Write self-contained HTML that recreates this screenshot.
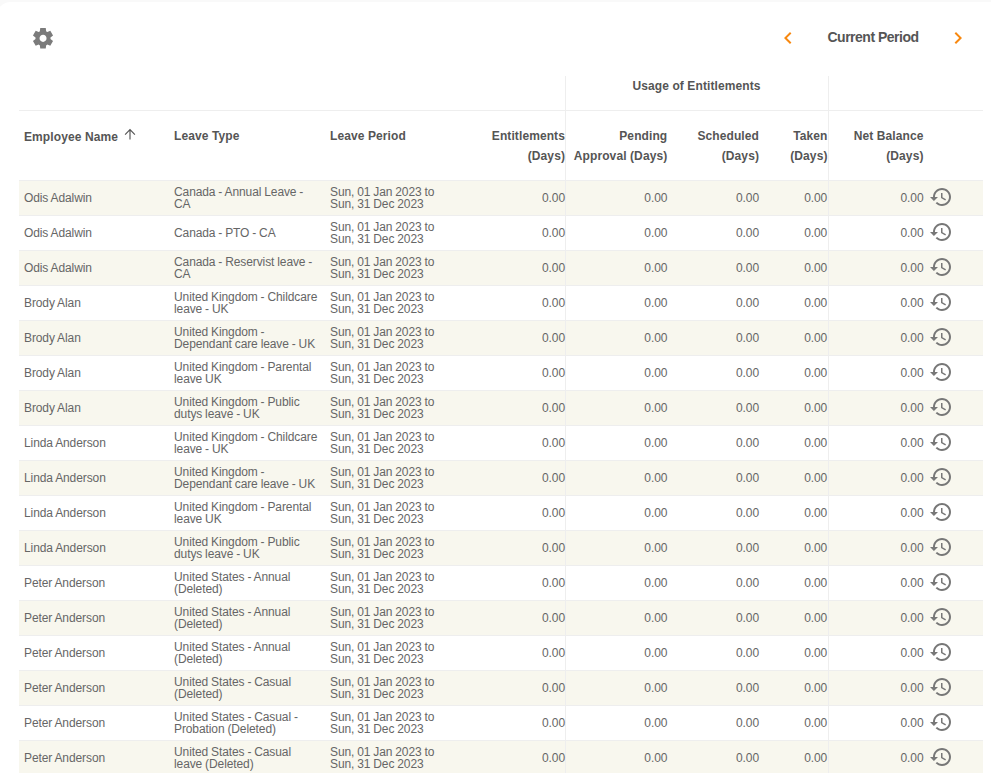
<!DOCTYPE html><html><head><meta charset="utf-8"><style>
html,body{margin:0;padding:0}
body{width:991px;height:773px;overflow:hidden;position:relative;background:#f9f9f9;font-family:"Liberation Sans",sans-serif;}
.card{position:absolute;left:-4px;top:2px;width:1010px;height:800px;background:#fff;border-radius:15px;}
.t{position:absolute;white-space:nowrap;font-size:12px;line-height:12px;color:#666666;letter-spacing:-0.1px;word-spacing:-0.3px}
.h{position:absolute;white-space:nowrap;font-size:12px;line-height:20px;font-weight:bold;color:#555555;letter-spacing:0.1px}
.r{text-align:right}
.hl{position:absolute;height:1px;background:#eeeeee;left:19px;width:964px}
.vl{position:absolute;width:1px;background:#eeeeee;}
.bg{position:absolute;background:#f8f7ee;left:19px;width:964px;height:35px}
svg{position:absolute}
</style></head><body><div class="card"></div>
<svg style="left:31px;top:26px" width="24" height="24.6" preserveAspectRatio="none" viewBox="0 -960 960 960"><path fill="#7b7b7b" d="m370-80-16-128q-13-5-24.5-12T307-235l-119 50L78-375l103-78q-1-7-1-13.5v-27q0-6.5 1-13.5L78-585l110-190 119 50q11-8 23-15t24-12l16-128h220l16 128q13 5 24.5 12t22.5 15l119-50 110 190-103 78q1 7 1 13.5v27q0 6.5-2 13.5l103 78-110 190-118-50q-11 8-23 15t-24 12L590-80H370Zm112-260q58 0 99-41t41-99q0-58-41-99t-99-41q-59 0-99.5 41T342-480q0 58 40.5 99t99.5 41Z"/></svg>
<svg style="left:776px;top:26px" width="24" height="24" viewBox="0 0 24 24"><path fill="#f8880f" d="M15.41 7.41L14 6l-6 6 6 6 1.41-1.41L10.83 12z"/></svg>
<svg style="left:946.4px;top:26.4px" width="24" height="24" viewBox="0 0 24 24"><path fill="#f8880f" d="M10 6L8.59 7.41 13.17 12l-4.58 4.59L10 18l6-6z"/></svg>
<div class="h" style="left:827.5px;top:27px;font-size:14px;letter-spacing:-0.5px;line-height:20px;color:#555">Current Period</div>
<div class="bg" style="top:180px"></div>
<div class="bg" style="top:250px"></div>
<div class="bg" style="top:320px"></div>
<div class="bg" style="top:390px"></div>
<div class="bg" style="top:460px"></div>
<div class="bg" style="top:530px"></div>
<div class="bg" style="top:600px"></div>
<div class="bg" style="top:670px"></div>
<div class="bg" style="top:740px"></div>
<div class="hl" style="top:110px"></div>
<div class="hl" style="top:180px"></div>
<div class="hl" style="top:215px"></div>
<div class="hl" style="top:250px"></div>
<div class="hl" style="top:285px"></div>
<div class="hl" style="top:320px"></div>
<div class="hl" style="top:355px"></div>
<div class="hl" style="top:390px"></div>
<div class="hl" style="top:425px"></div>
<div class="hl" style="top:460px"></div>
<div class="hl" style="top:495px"></div>
<div class="hl" style="top:530px"></div>
<div class="hl" style="top:565px"></div>
<div class="hl" style="top:600px"></div>
<div class="hl" style="top:635px"></div>
<div class="hl" style="top:670px"></div>
<div class="hl" style="top:705px"></div>
<div class="hl" style="top:740px"></div>
<div class="vl" style="left:565px;top:76px;height:700px"></div>
<div class="vl" style="left:828px;top:76px;height:700px"></div>
<div class="h" style="left:565px;width:263px;text-align:center;top:76px">Usage of Entitlements</div>
<div class="h" style="left:24px;top:127px">Employee Name</div>
<div class="h" style="left:174px;top:126px">Leave Type</div>
<div class="h" style="left:330px;top:126px">Leave Period</div>
<div class="h r" style="right:426px;top:126px">Entitlements<br>(Days)</div>
<div class="h r" style="right:323.70000000000005px;top:126px">Pending<br>Approval (Days)</div>
<div class="h r" style="right:232px;top:126px">Scheduled<br>(Days)</div>
<div class="h r" style="right:163.5px;top:126px">Taken<br>(Days)</div>
<div class="h r" style="right:67.5px;top:126px">Net Balance<br>(Days)</div>
<svg style="left:123px;top:127px" width="14" height="14" viewBox="0 0 14 14"><path d="M7 12.5V2.6M2.1 7.6L7 2.6 11.9 7.6" fill="none" stroke="#555" stroke-width="1.15"/></svg>
<div class="t" style="left:24px;top:191.5px">Odis Adalwin</div>
<div class="t" style="left:174px;top:185.5px">Canada - Annual Leave -<br>CA</div>
<div class="t" style="left:330px;top:185.5px">Sun, 01 Jan 2023 to<br>Sun, 31 Dec 2023</div>
<div class="t r" style="right:426px;top:191.5px">0.00</div>
<div class="t r" style="right:323.7px;top:191.5px">0.00</div>
<div class="t r" style="right:232px;top:191.5px">0.00</div>
<div class="t r" style="right:163.8px;top:191.5px">0.00</div>
<div class="t r" style="right:67.5px;top:191.5px">0.00</div>
<svg style="left:929px;top:185.2px" width="24" height="24" viewBox="0 0 24 24"><path fill="#777777" d="M13 3c-4.97 0-9 4.03-9 9H1l3.89 3.89.07.14L9 12H6c0-3.87 3.13-7 7-7s7 3.13 7 7-3.13 7-7 7c-1.93 0-3.68-.79-4.94-2.06l-1.42 1.42C8.27 19.99 10.51 21 13 21c4.97 0 9-4.03 9-9s-4.03-9-9-9zm-1 5v5l4.28 2.54.72-1.21-3.5-2.08V8H12z"/></svg>
<div class="t" style="left:24px;top:226.5px">Odis Adalwin</div>
<div class="t" style="left:174px;top:226.5px">Canada - PTO - CA</div>
<div class="t" style="left:330px;top:220.5px">Sun, 01 Jan 2023 to<br>Sun, 31 Dec 2023</div>
<div class="t r" style="right:426px;top:226.5px">0.00</div>
<div class="t r" style="right:323.7px;top:226.5px">0.00</div>
<div class="t r" style="right:232px;top:226.5px">0.00</div>
<div class="t r" style="right:163.8px;top:226.5px">0.00</div>
<div class="t r" style="right:67.5px;top:226.5px">0.00</div>
<svg style="left:929px;top:220.2px" width="24" height="24" viewBox="0 0 24 24"><path fill="#777777" d="M13 3c-4.97 0-9 4.03-9 9H1l3.89 3.89.07.14L9 12H6c0-3.87 3.13-7 7-7s7 3.13 7 7-3.13 7-7 7c-1.93 0-3.68-.79-4.94-2.06l-1.42 1.42C8.27 19.99 10.51 21 13 21c4.97 0 9-4.03 9-9s-4.03-9-9-9zm-1 5v5l4.28 2.54.72-1.21-3.5-2.08V8H12z"/></svg>
<div class="t" style="left:24px;top:261.5px">Odis Adalwin</div>
<div class="t" style="left:174px;top:255.5px">Canada - Reservist leave -<br>CA</div>
<div class="t" style="left:330px;top:255.5px">Sun, 01 Jan 2023 to<br>Sun, 31 Dec 2023</div>
<div class="t r" style="right:426px;top:261.5px">0.00</div>
<div class="t r" style="right:323.7px;top:261.5px">0.00</div>
<div class="t r" style="right:232px;top:261.5px">0.00</div>
<div class="t r" style="right:163.8px;top:261.5px">0.00</div>
<div class="t r" style="right:67.5px;top:261.5px">0.00</div>
<svg style="left:929px;top:255.2px" width="24" height="24" viewBox="0 0 24 24"><path fill="#777777" d="M13 3c-4.97 0-9 4.03-9 9H1l3.89 3.89.07.14L9 12H6c0-3.87 3.13-7 7-7s7 3.13 7 7-3.13 7-7 7c-1.93 0-3.68-.79-4.94-2.06l-1.42 1.42C8.27 19.99 10.51 21 13 21c4.97 0 9-4.03 9-9s-4.03-9-9-9zm-1 5v5l4.28 2.54.72-1.21-3.5-2.08V8H12z"/></svg>
<div class="t" style="left:24px;top:296.5px">Brody Alan</div>
<div class="t" style="left:174px;top:290.5px">United Kingdom - Childcare<br>leave - UK</div>
<div class="t" style="left:330px;top:290.5px">Sun, 01 Jan 2023 to<br>Sun, 31 Dec 2023</div>
<div class="t r" style="right:426px;top:296.5px">0.00</div>
<div class="t r" style="right:323.7px;top:296.5px">0.00</div>
<div class="t r" style="right:232px;top:296.5px">0.00</div>
<div class="t r" style="right:163.8px;top:296.5px">0.00</div>
<div class="t r" style="right:67.5px;top:296.5px">0.00</div>
<svg style="left:929px;top:290.2px" width="24" height="24" viewBox="0 0 24 24"><path fill="#777777" d="M13 3c-4.97 0-9 4.03-9 9H1l3.89 3.89.07.14L9 12H6c0-3.87 3.13-7 7-7s7 3.13 7 7-3.13 7-7 7c-1.93 0-3.68-.79-4.94-2.06l-1.42 1.42C8.27 19.99 10.51 21 13 21c4.97 0 9-4.03 9-9s-4.03-9-9-9zm-1 5v5l4.28 2.54.72-1.21-3.5-2.08V8H12z"/></svg>
<div class="t" style="left:24px;top:331.5px">Brody Alan</div>
<div class="t" style="left:174px;top:325.5px">United Kingdom -<br>Dependant care leave - UK</div>
<div class="t" style="left:330px;top:325.5px">Sun, 01 Jan 2023 to<br>Sun, 31 Dec 2023</div>
<div class="t r" style="right:426px;top:331.5px">0.00</div>
<div class="t r" style="right:323.7px;top:331.5px">0.00</div>
<div class="t r" style="right:232px;top:331.5px">0.00</div>
<div class="t r" style="right:163.8px;top:331.5px">0.00</div>
<div class="t r" style="right:67.5px;top:331.5px">0.00</div>
<svg style="left:929px;top:325.2px" width="24" height="24" viewBox="0 0 24 24"><path fill="#777777" d="M13 3c-4.97 0-9 4.03-9 9H1l3.89 3.89.07.14L9 12H6c0-3.87 3.13-7 7-7s7 3.13 7 7-3.13 7-7 7c-1.93 0-3.68-.79-4.94-2.06l-1.42 1.42C8.27 19.99 10.51 21 13 21c4.97 0 9-4.03 9-9s-4.03-9-9-9zm-1 5v5l4.28 2.54.72-1.21-3.5-2.08V8H12z"/></svg>
<div class="t" style="left:24px;top:366.5px">Brody Alan</div>
<div class="t" style="left:174px;top:360.5px">United Kingdom - Parental<br>leave UK</div>
<div class="t" style="left:330px;top:360.5px">Sun, 01 Jan 2023 to<br>Sun, 31 Dec 2023</div>
<div class="t r" style="right:426px;top:366.5px">0.00</div>
<div class="t r" style="right:323.7px;top:366.5px">0.00</div>
<div class="t r" style="right:232px;top:366.5px">0.00</div>
<div class="t r" style="right:163.8px;top:366.5px">0.00</div>
<div class="t r" style="right:67.5px;top:366.5px">0.00</div>
<svg style="left:929px;top:360.2px" width="24" height="24" viewBox="0 0 24 24"><path fill="#777777" d="M13 3c-4.97 0-9 4.03-9 9H1l3.89 3.89.07.14L9 12H6c0-3.87 3.13-7 7-7s7 3.13 7 7-3.13 7-7 7c-1.93 0-3.68-.79-4.94-2.06l-1.42 1.42C8.27 19.99 10.51 21 13 21c4.97 0 9-4.03 9-9s-4.03-9-9-9zm-1 5v5l4.28 2.54.72-1.21-3.5-2.08V8H12z"/></svg>
<div class="t" style="left:24px;top:401.5px">Brody Alan</div>
<div class="t" style="left:174px;top:395.5px">United Kingdom - Public<br>dutys leave - UK</div>
<div class="t" style="left:330px;top:395.5px">Sun, 01 Jan 2023 to<br>Sun, 31 Dec 2023</div>
<div class="t r" style="right:426px;top:401.5px">0.00</div>
<div class="t r" style="right:323.7px;top:401.5px">0.00</div>
<div class="t r" style="right:232px;top:401.5px">0.00</div>
<div class="t r" style="right:163.8px;top:401.5px">0.00</div>
<div class="t r" style="right:67.5px;top:401.5px">0.00</div>
<svg style="left:929px;top:395.2px" width="24" height="24" viewBox="0 0 24 24"><path fill="#777777" d="M13 3c-4.97 0-9 4.03-9 9H1l3.89 3.89.07.14L9 12H6c0-3.87 3.13-7 7-7s7 3.13 7 7-3.13 7-7 7c-1.93 0-3.68-.79-4.94-2.06l-1.42 1.42C8.27 19.99 10.51 21 13 21c4.97 0 9-4.03 9-9s-4.03-9-9-9zm-1 5v5l4.28 2.54.72-1.21-3.5-2.08V8H12z"/></svg>
<div class="t" style="left:24px;top:436.5px">Linda Anderson</div>
<div class="t" style="left:174px;top:430.5px">United Kingdom - Childcare<br>leave - UK</div>
<div class="t" style="left:330px;top:430.5px">Sun, 01 Jan 2023 to<br>Sun, 31 Dec 2023</div>
<div class="t r" style="right:426px;top:436.5px">0.00</div>
<div class="t r" style="right:323.7px;top:436.5px">0.00</div>
<div class="t r" style="right:232px;top:436.5px">0.00</div>
<div class="t r" style="right:163.8px;top:436.5px">0.00</div>
<div class="t r" style="right:67.5px;top:436.5px">0.00</div>
<svg style="left:929px;top:430.2px" width="24" height="24" viewBox="0 0 24 24"><path fill="#777777" d="M13 3c-4.97 0-9 4.03-9 9H1l3.89 3.89.07.14L9 12H6c0-3.87 3.13-7 7-7s7 3.13 7 7-3.13 7-7 7c-1.93 0-3.68-.79-4.94-2.06l-1.42 1.42C8.27 19.99 10.51 21 13 21c4.97 0 9-4.03 9-9s-4.03-9-9-9zm-1 5v5l4.28 2.54.72-1.21-3.5-2.08V8H12z"/></svg>
<div class="t" style="left:24px;top:471.5px">Linda Anderson</div>
<div class="t" style="left:174px;top:465.5px">United Kingdom -<br>Dependant care leave - UK</div>
<div class="t" style="left:330px;top:465.5px">Sun, 01 Jan 2023 to<br>Sun, 31 Dec 2023</div>
<div class="t r" style="right:426px;top:471.5px">0.00</div>
<div class="t r" style="right:323.7px;top:471.5px">0.00</div>
<div class="t r" style="right:232px;top:471.5px">0.00</div>
<div class="t r" style="right:163.8px;top:471.5px">0.00</div>
<div class="t r" style="right:67.5px;top:471.5px">0.00</div>
<svg style="left:929px;top:465.2px" width="24" height="24" viewBox="0 0 24 24"><path fill="#777777" d="M13 3c-4.97 0-9 4.03-9 9H1l3.89 3.89.07.14L9 12H6c0-3.87 3.13-7 7-7s7 3.13 7 7-3.13 7-7 7c-1.93 0-3.68-.79-4.94-2.06l-1.42 1.42C8.27 19.99 10.51 21 13 21c4.97 0 9-4.03 9-9s-4.03-9-9-9zm-1 5v5l4.28 2.54.72-1.21-3.5-2.08V8H12z"/></svg>
<div class="t" style="left:24px;top:506.5px">Linda Anderson</div>
<div class="t" style="left:174px;top:500.5px">United Kingdom - Parental<br>leave UK</div>
<div class="t" style="left:330px;top:500.5px">Sun, 01 Jan 2023 to<br>Sun, 31 Dec 2023</div>
<div class="t r" style="right:426px;top:506.5px">0.00</div>
<div class="t r" style="right:323.7px;top:506.5px">0.00</div>
<div class="t r" style="right:232px;top:506.5px">0.00</div>
<div class="t r" style="right:163.8px;top:506.5px">0.00</div>
<div class="t r" style="right:67.5px;top:506.5px">0.00</div>
<svg style="left:929px;top:500.2px" width="24" height="24" viewBox="0 0 24 24"><path fill="#777777" d="M13 3c-4.97 0-9 4.03-9 9H1l3.89 3.89.07.14L9 12H6c0-3.87 3.13-7 7-7s7 3.13 7 7-3.13 7-7 7c-1.93 0-3.68-.79-4.94-2.06l-1.42 1.42C8.27 19.99 10.51 21 13 21c4.97 0 9-4.03 9-9s-4.03-9-9-9zm-1 5v5l4.28 2.54.72-1.21-3.5-2.08V8H12z"/></svg>
<div class="t" style="left:24px;top:541.5px">Linda Anderson</div>
<div class="t" style="left:174px;top:535.5px">United Kingdom - Public<br>dutys leave - UK</div>
<div class="t" style="left:330px;top:535.5px">Sun, 01 Jan 2023 to<br>Sun, 31 Dec 2023</div>
<div class="t r" style="right:426px;top:541.5px">0.00</div>
<div class="t r" style="right:323.7px;top:541.5px">0.00</div>
<div class="t r" style="right:232px;top:541.5px">0.00</div>
<div class="t r" style="right:163.8px;top:541.5px">0.00</div>
<div class="t r" style="right:67.5px;top:541.5px">0.00</div>
<svg style="left:929px;top:535.2px" width="24" height="24" viewBox="0 0 24 24"><path fill="#777777" d="M13 3c-4.97 0-9 4.03-9 9H1l3.89 3.89.07.14L9 12H6c0-3.87 3.13-7 7-7s7 3.13 7 7-3.13 7-7 7c-1.93 0-3.68-.79-4.94-2.06l-1.42 1.42C8.27 19.99 10.51 21 13 21c4.97 0 9-4.03 9-9s-4.03-9-9-9zm-1 5v5l4.28 2.54.72-1.21-3.5-2.08V8H12z"/></svg>
<div class="t" style="left:24px;top:576.5px">Peter Anderson</div>
<div class="t" style="left:174px;top:570.5px">United States - Annual<br>(Deleted)</div>
<div class="t" style="left:330px;top:570.5px">Sun, 01 Jan 2023 to<br>Sun, 31 Dec 2023</div>
<div class="t r" style="right:426px;top:576.5px">0.00</div>
<div class="t r" style="right:323.7px;top:576.5px">0.00</div>
<div class="t r" style="right:232px;top:576.5px">0.00</div>
<div class="t r" style="right:163.8px;top:576.5px">0.00</div>
<div class="t r" style="right:67.5px;top:576.5px">0.00</div>
<svg style="left:929px;top:570.2px" width="24" height="24" viewBox="0 0 24 24"><path fill="#777777" d="M13 3c-4.97 0-9 4.03-9 9H1l3.89 3.89.07.14L9 12H6c0-3.87 3.13-7 7-7s7 3.13 7 7-3.13 7-7 7c-1.93 0-3.68-.79-4.94-2.06l-1.42 1.42C8.27 19.99 10.51 21 13 21c4.97 0 9-4.03 9-9s-4.03-9-9-9zm-1 5v5l4.28 2.54.72-1.21-3.5-2.08V8H12z"/></svg>
<div class="t" style="left:24px;top:611.5px">Peter Anderson</div>
<div class="t" style="left:174px;top:605.5px">United States - Annual<br>(Deleted)</div>
<div class="t" style="left:330px;top:605.5px">Sun, 01 Jan 2023 to<br>Sun, 31 Dec 2023</div>
<div class="t r" style="right:426px;top:611.5px">0.00</div>
<div class="t r" style="right:323.7px;top:611.5px">0.00</div>
<div class="t r" style="right:232px;top:611.5px">0.00</div>
<div class="t r" style="right:163.8px;top:611.5px">0.00</div>
<div class="t r" style="right:67.5px;top:611.5px">0.00</div>
<svg style="left:929px;top:605.2px" width="24" height="24" viewBox="0 0 24 24"><path fill="#777777" d="M13 3c-4.97 0-9 4.03-9 9H1l3.89 3.89.07.14L9 12H6c0-3.87 3.13-7 7-7s7 3.13 7 7-3.13 7-7 7c-1.93 0-3.68-.79-4.94-2.06l-1.42 1.42C8.27 19.99 10.51 21 13 21c4.97 0 9-4.03 9-9s-4.03-9-9-9zm-1 5v5l4.28 2.54.72-1.21-3.5-2.08V8H12z"/></svg>
<div class="t" style="left:24px;top:646.5px">Peter Anderson</div>
<div class="t" style="left:174px;top:640.5px">United States - Annual<br>(Deleted)</div>
<div class="t" style="left:330px;top:640.5px">Sun, 01 Jan 2023 to<br>Sun, 31 Dec 2023</div>
<div class="t r" style="right:426px;top:646.5px">0.00</div>
<div class="t r" style="right:323.7px;top:646.5px">0.00</div>
<div class="t r" style="right:232px;top:646.5px">0.00</div>
<div class="t r" style="right:163.8px;top:646.5px">0.00</div>
<div class="t r" style="right:67.5px;top:646.5px">0.00</div>
<svg style="left:929px;top:640.2px" width="24" height="24" viewBox="0 0 24 24"><path fill="#777777" d="M13 3c-4.97 0-9 4.03-9 9H1l3.89 3.89.07.14L9 12H6c0-3.87 3.13-7 7-7s7 3.13 7 7-3.13 7-7 7c-1.93 0-3.68-.79-4.94-2.06l-1.42 1.42C8.27 19.99 10.51 21 13 21c4.97 0 9-4.03 9-9s-4.03-9-9-9zm-1 5v5l4.28 2.54.72-1.21-3.5-2.08V8H12z"/></svg>
<div class="t" style="left:24px;top:681.5px">Peter Anderson</div>
<div class="t" style="left:174px;top:675.5px">United States - Casual<br>(Deleted)</div>
<div class="t" style="left:330px;top:675.5px">Sun, 01 Jan 2023 to<br>Sun, 31 Dec 2023</div>
<div class="t r" style="right:426px;top:681.5px">0.00</div>
<div class="t r" style="right:323.7px;top:681.5px">0.00</div>
<div class="t r" style="right:232px;top:681.5px">0.00</div>
<div class="t r" style="right:163.8px;top:681.5px">0.00</div>
<div class="t r" style="right:67.5px;top:681.5px">0.00</div>
<svg style="left:929px;top:675.2px" width="24" height="24" viewBox="0 0 24 24"><path fill="#777777" d="M13 3c-4.97 0-9 4.03-9 9H1l3.89 3.89.07.14L9 12H6c0-3.87 3.13-7 7-7s7 3.13 7 7-3.13 7-7 7c-1.93 0-3.68-.79-4.94-2.06l-1.42 1.42C8.27 19.99 10.51 21 13 21c4.97 0 9-4.03 9-9s-4.03-9-9-9zm-1 5v5l4.28 2.54.72-1.21-3.5-2.08V8H12z"/></svg>
<div class="t" style="left:24px;top:716.5px">Peter Anderson</div>
<div class="t" style="left:174px;top:710.5px">United States - Casual -<br>Probation (Deleted)</div>
<div class="t" style="left:330px;top:710.5px">Sun, 01 Jan 2023 to<br>Sun, 31 Dec 2023</div>
<div class="t r" style="right:426px;top:716.5px">0.00</div>
<div class="t r" style="right:323.7px;top:716.5px">0.00</div>
<div class="t r" style="right:232px;top:716.5px">0.00</div>
<div class="t r" style="right:163.8px;top:716.5px">0.00</div>
<div class="t r" style="right:67.5px;top:716.5px">0.00</div>
<svg style="left:929px;top:710.2px" width="24" height="24" viewBox="0 0 24 24"><path fill="#777777" d="M13 3c-4.97 0-9 4.03-9 9H1l3.89 3.89.07.14L9 12H6c0-3.87 3.13-7 7-7s7 3.13 7 7-3.13 7-7 7c-1.93 0-3.68-.79-4.94-2.06l-1.42 1.42C8.27 19.99 10.51 21 13 21c4.97 0 9-4.03 9-9s-4.03-9-9-9zm-1 5v5l4.28 2.54.72-1.21-3.5-2.08V8H12z"/></svg>
<div class="t" style="left:24px;top:751.5px">Peter Anderson</div>
<div class="t" style="left:174px;top:745.5px">United States - Casual<br>leave (Deleted)</div>
<div class="t" style="left:330px;top:745.5px">Sun, 01 Jan 2023 to<br>Sun, 31 Dec 2023</div>
<div class="t r" style="right:426px;top:751.5px">0.00</div>
<div class="t r" style="right:323.7px;top:751.5px">0.00</div>
<div class="t r" style="right:232px;top:751.5px">0.00</div>
<div class="t r" style="right:163.8px;top:751.5px">0.00</div>
<div class="t r" style="right:67.5px;top:751.5px">0.00</div>
<svg style="left:929px;top:745.2px" width="24" height="24" viewBox="0 0 24 24"><path fill="#777777" d="M13 3c-4.97 0-9 4.03-9 9H1l3.89 3.89.07.14L9 12H6c0-3.87 3.13-7 7-7s7 3.13 7 7-3.13 7-7 7c-1.93 0-3.68-.79-4.94-2.06l-1.42 1.42C8.27 19.99 10.51 21 13 21c4.97 0 9-4.03 9-9s-4.03-9-9-9zm-1 5v5l4.28 2.54.72-1.21-3.5-2.08V8H12z"/></svg>
</body></html>
